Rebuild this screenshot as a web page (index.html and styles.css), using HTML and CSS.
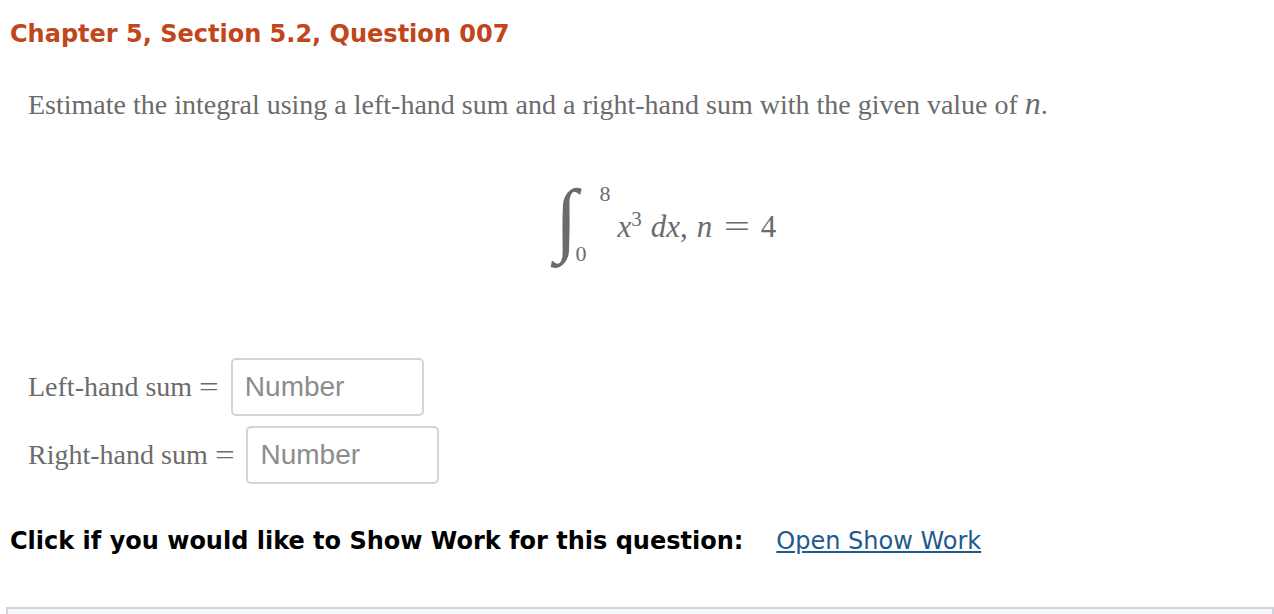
FILE: index.html
```html
<!DOCTYPE html>
<html>
<head>
<meta charset="utf-8">
<link rel="stylesheet" href="styles.css">
</head>
<body>
<div class="page">
  <h1 class="title">Chapter 5, Section 5.2, Question 007</h1>
  <p class="prompt">Estimate the integral using a left-hand sum and a right-hand sum with the given value of <i class="var">n</i>.</p>
  <div class="formula">
    <span class="int">∫</span>
    <span class="limits"><span class="up">8</span><span class="lo">0</span></span>
    <span class="expr"><i>x</i><sup>3</sup><span class="sp"></span><i>dx</i>,<span class="sp"></span><i>n</i><span class="eq">=</span>4</span>
  </div>
  <div class="answers">
    <div class="row"><span class="label">Left-hand sum<span class="eq">=</span></span><input class="num" type="text" placeholder="Number"></div>
    <div class="row"><span class="label">Right-hand sum<span class="eq">=</span></span><input class="num" type="text" placeholder="Number"></div>
  </div>
  <div class="showwork">
    <span class="sw-text">Click if you would like to Show Work for this question:</span>
    <a class="sw-link" href="#">Open Show Work</a>
  </div>
  <div class="panel"></div>
</div>
</body>
</html>
```
FILE: styles.css
```css
html, body { margin: 0; padding: 0; background: #fff; }
.page { padding: 0 0 0 10px; }
.title {
  margin: 0;
  padding-top: 18px;
  font-family: "DejaVu Sans", Verdana, sans-serif;
  font-weight: bold;
  font-size: 24px;
  line-height: 32px;
  color: #c0461b;
}
.prompt {
  margin: 37px 0 0 18px;
  font-family: "Liberation Serif", "Times New Roman", serif;
  font-size: 28px;
  line-height: 32px;
  color: #6b6b6b;
}
.var { font-size: 32px; }
.formula {
  display: flex;
  align-items: center;
  margin-top: 53px;
  padding-left: 545px;
  font-family: "Liberation Serif", "Times New Roman", serif;
  color: #6b6b6b;
  height: 100px;
}
.int { font-size: 82px; line-height: 1; font-style: italic; margin-top: -10px; }
.limits { display: flex; flex-direction: column; justify-content: space-between; height: 86px; font-size: 22px; margin-left: -2px; }
.up { margin-left: 24px; }
.expr { font-size: 31px; margin-left: 7px; margin-top: 4px; }
.expr sup { font-size: 21px; }
.sp { display: inline-block; width: 9px; }
.expr .eq { display: inline-block; margin: 0 15px 0 16px; transform: scaleX(1.5); }
.answers { margin: 84px 0 0 18px; display: flex; flex-direction: column; gap: 10px; }
.row { display: flex; align-items: center; gap: 12px; }
.label {
  font-family: "Liberation Serif", "Times New Roman", serif;
  font-size: 28px;
  color: #6b6b6b;
}
.label .eq { display: inline-block; margin: 0 2px 0 9px; font-size: 28px; transform: scaleX(1.25); }
.num {
  box-sizing: border-box;
  width: 193px;
  height: 58px;
  border: 2px solid #d4d4d4;
  border-radius: 5px;
  padding: 0 12px;
  font-family: "Liberation Sans", Arial, sans-serif;
  font-size: 28px;
  color: #333;
  outline: none;
}
.num::placeholder { color: #8c8c8c; }
.showwork {
  margin-top: 43px;
  display: flex;
  align-items: baseline;
  gap: 33px;
}
.sw-text {
  font-family: "DejaVu Sans", Tahoma, sans-serif;
  font-weight: bold;
  font-size: 24px;
  color: #000;
}
.sw-link {
  font-family: "DejaVu Sans", Tahoma, sans-serif;
  font-size: 24px;
  color: #1f5a8c;
}
.panel {
  margin: 52px 0 0 -4px;
  height: 30px;
  border: 2px solid #cdd3e0;
  background: #f5f7fa;
}
```
